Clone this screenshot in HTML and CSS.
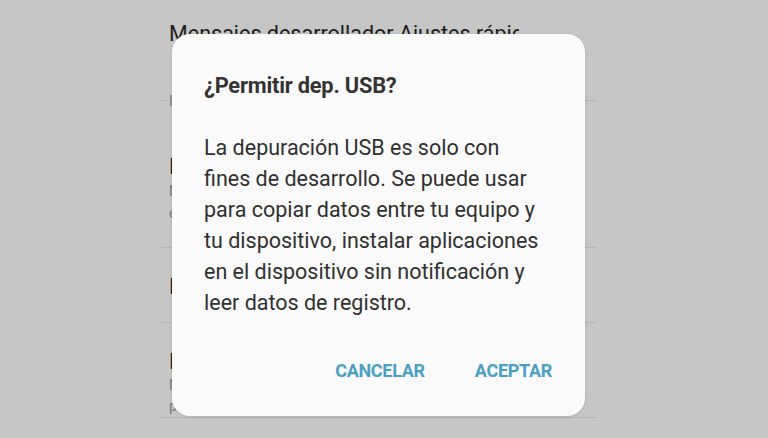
FILE: index.html
```html
<!DOCTYPE html>
<html lang="es">
<head>
<meta charset="utf-8">
<title>¿Permitir dep. USB?</title>
<link rel="stylesheet" href="styles.css">
</head>
<body>
<div class="screen">
  <div class="settings">
    <div class="row row-header">
      <div class="row-title">Mensajes desarrollador Ajustes rápidos</div>
      <div class="row-sub">Informe de errores</div>
    </div>
    <div class="row row-a">
      <div class="row-title">Depuración USB</div>
      <div class="row-sub">Modo de depuración cuando el USB</div>
      <div class="row-sub">está conectado</div>
    </div>
    <div class="row row-b">
      <div class="row-title">Revocar autorizaciones</div>
    </div>
    <div class="row row-c">
      <div class="row-title">Bloquear ubicaciones</div>
      <div class="row-sub">Ninguna aplicación</div>
      <div class="row-sub">permitida</div>
    </div>
  </div>

  <div class="dialog" role="dialog">
    <h1 class="dialog-title">¿Permitir dep. USB?</h1>
    <p class="dialog-body">La depuración USB es solo con<br>fines de desarrollo. Se puede usar<br>para copiar datos entre tu equipo y<br>tu dispositivo, instalar aplicaciones<br>en el dispositivo sin notificación y<br>leer datos de registro.</p>
    <div class="dialog-actions">
      <button class="btn">CANCELAR</button>
      <button class="btn">ACEPTAR</button>
    </div>
  </div>
</div>
</body>
</html>
```

FILE: styles.css
```css
html, body {
  margin: 0;
  padding: 0;
}
body {
  width: 768px;
  height: 438px;
  overflow: hidden;
  background: #c6c6c6;
  font-family: Roboto, "Noto Sans", sans-serif;
}
.screen {
  position: relative;
  width: 768px;
  height: 438px;
  overflow: hidden;
}
.settings {
  margin-left: 160px;
  width: 437px;
}
.row {
  box-sizing: border-box;
  border-bottom: 1px solid #b6b6b6;
  padding-left: 9px;
  white-space: nowrap;
}
.row-title {
  font-size: 21.5px;
  line-height: 26px;
  color: #1e1e1e;
}
.row-sub {
  font-size: 14px;
  line-height: 22px;
  color: #7a7a7a;
}
.row-header {
  height: 101px;
  padding-top: 21px;
}
.row-header .row-title {
  width: 350px;
  overflow: hidden;
}
.row-header .row-sub {
  margin-top: 43px;
}
.row-a {
  height: 147px;
  padding-top: 53px;
}
.row-b {
  height: 75px;
  padding-top: 26px;
}
.row-c {
  padding-top: 26px;
}
.row-c .row-sub {
  line-height: 21px;
}

.dialog {
  position: absolute;
  left: 172px;
  top: 34px;
  width: 413px;
  height: 382px;
  box-sizing: border-box;
  background: #fafafa;
  border-radius: 18px;
  box-shadow: 0 1px 3px rgba(0, 0, 0, 0.12);
  padding: 38px 32px 0 32px;
  display: flex;
  flex-direction: column;
}
.dialog-title {
  margin: 0;
  font-size: 21.8px;
  line-height: 28px;
  font-weight: 700;
  color: #333333;
  letter-spacing: -0.2px;
}
.dialog-body {
  margin: 32px 0 0 0;
  font-size: 21.5px;
  line-height: 31px;
  color: #303030;
  white-space: nowrap;
}
.dialog-actions {
  display: flex;
  justify-content: flex-end;
  gap: 50px;
  margin-top: 41px;
  margin-right: 1px;
}
.btn {
  background: none;
  border: 0;
  padding: 0;
  font-family: Roboto, "Noto Sans", sans-serif;
  font-weight: 700;
  font-size: 18px;
  line-height: 24px;
  color: #4aa0c4;
  letter-spacing: -0.3px;
}
```
